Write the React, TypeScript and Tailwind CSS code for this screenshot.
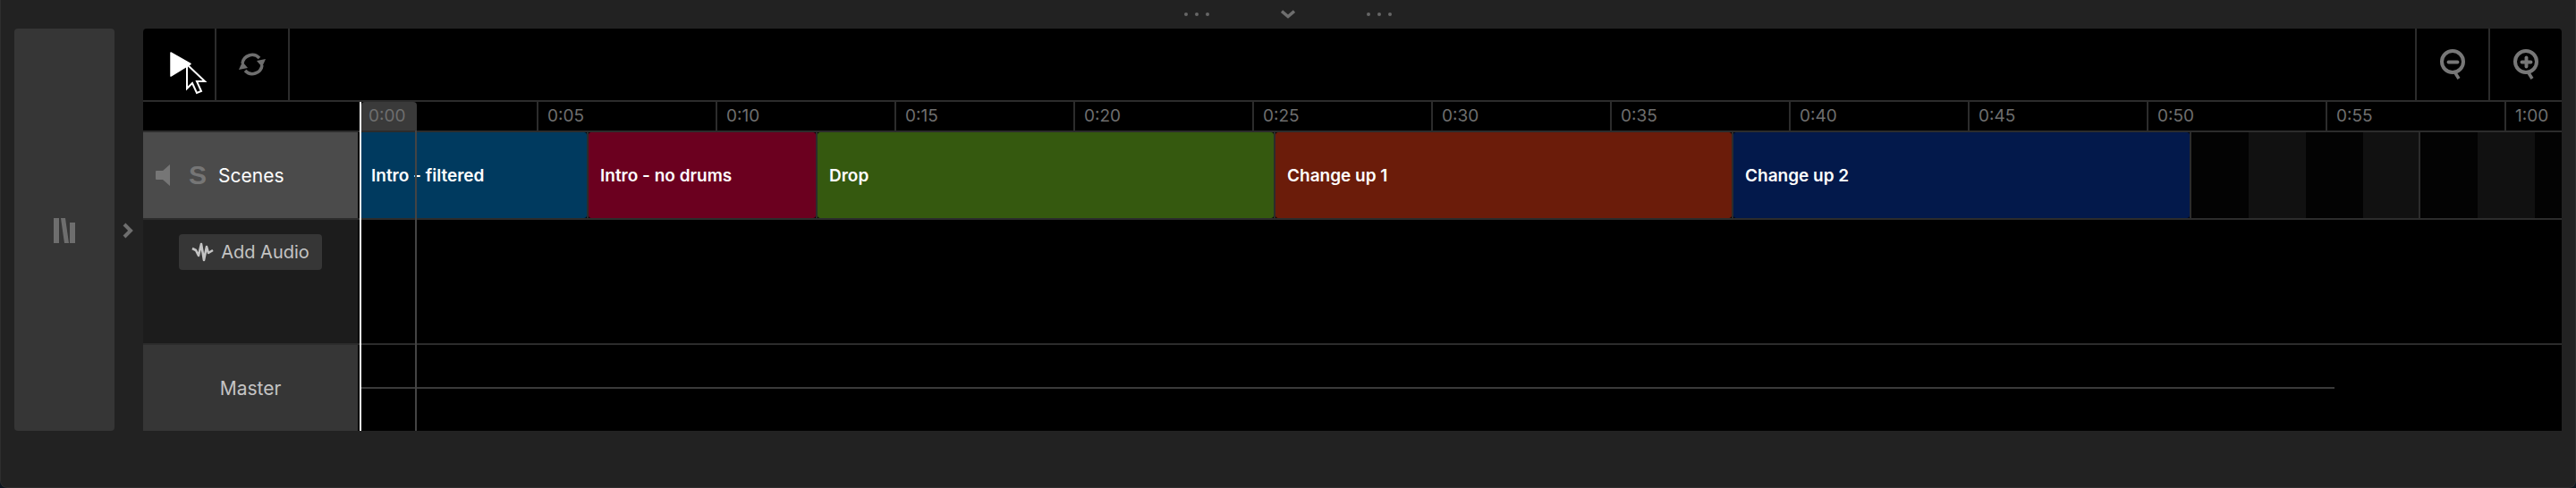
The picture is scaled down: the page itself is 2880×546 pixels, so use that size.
import { Minus, Plus } from 'lucide-react';

const ticks = ['0:00', '0:05', '0:10', '0:15', '0:20', '0:25', '0:30', '0:35', '0:40', '0:45', '0:50', '0:55', '1:00'];

const scenes = [
  { name: 'Intro - filtered', width: 'w-[256px]', color: 'bg-[#003a5f]' },
  { name: 'Intro - no drums', width: 'w-[256px]', color: 'bg-[#6b001f]' },
  { name: 'Drop', width: 'w-[512px]', color: 'bg-[#35590f]' },
  { name: 'Change up 1', width: 'w-[512px]', color: 'bg-[#6b1c0a]' },
  { name: 'Change up 2', width: 'w-[512px]', color: 'bg-[#03194b]' },
];

function Dots() {
  return (
    <div className="flex gap-2">
      <span className="h-1 w-1 rounded-full bg-[#666]" />
      <span className="h-1 w-1 rounded-full bg-[#666]" />
      <span className="h-1 w-1 rounded-full bg-[#666]" />
    </div>
  );
}

function Chevron() {
  return (
    <svg width="16" height="10" viewBox="0 0 16 10" fill="none">
      <path d="M1 1.5 8 7.5l7-6" stroke="#6e6e6e" strokeWidth="3.5" />
    </svg>
  );
}

function PlayIcon() {
  return (
    <svg width="24" height="30" viewBox="0 0 24 30">
      <path d="M1 2 L23 14.5 L1 28 Z" fill="#fff" stroke="#fff" strokeWidth="1.5" strokeLinejoin="round" />
    </svg>
  );
}

function LoopIcon() {
  return (
    <svg width="32" height="26" viewBox="0 0 32 26" fill="none">
      <path d="M5 12a11 11 0 0 1 19-6" stroke="#6e6e6e" strokeWidth="3.5" />
      <path d="M27 14a11 11 0 0 1-19 6" stroke="#6e6e6e" strokeWidth="3.5" />
      <path d="M31 7 21 9l6 7Z" fill="#6e6e6e" />
      <path d="M1 19l10-2-6-7Z" fill="#6e6e6e" />
    </svg>
  );
}

function ZoomIcon({ plus }: { plus?: boolean }) {
  return (
    <div className="relative h-[34px] w-[28px]">
      <div className="flex h-[28px] w-[28px] items-center justify-center rounded-full border-4 border-[#777]">
        {plus ? <Plus size={17} color="#777" strokeWidth={5.5} className="shrink-0" /> : <Minus size={17} color="#777" strokeWidth={5.5} className="shrink-0" />}
      </div>
      <svg className="absolute left-[14px] top-[24px]" width="12" height="12" viewBox="0 0 12 12">
        <path d="M2 1l5 8" stroke="#777" strokeWidth="3.5" />
      </svg>
    </div>
  );
}

function SpeakerIcon() {
  return (
    <svg width="16" height="24" viewBox="0 0 16 24">
      <path d="M16 0v24L8 17H1a1 1 0 0 1-1-1V8a1 1 0 0 1 1-1h7Z" fill="#767676" />
    </svg>
  );
}

function WaveIcon() {
  return (
    <svg width="26" height="22" viewBox="0 0 26 22" fill="none">
      <path d="M1 7l4 2 3 6 3-13 3 18 3-15 2 7 5-3" stroke="#c4c4c4" strokeWidth="2.6" strokeLinejoin="round" />
    </svg>
  );
}

function LibraryIcon() {
  return (
    <svg width="24" height="28" viewBox="0 0 24 28" fill="#6e6e6e">
      <rect x="0" y="0" width="6" height="28" />
      <path d="M8 0h5l4 28h-5Z" />
      <rect x="18" y="5" width="6" height="23" />
    </svg>
  );
}

function CursorIcon() {
  return (
    <svg className="absolute left-[206px] top-[70px]" width="26" height="36" viewBox="0 0 26 36">
      <path d="M2 2v27l6-6 5 11 5-2-5-11h9Z" fill="#000" stroke="#fff" strokeWidth="2" />
    </svg>
  );
}

export default function App() {
  return (
    <div className="h-[546px] w-[2880px] bg-[#0c1620]">
      <div className="relative flex h-[546px] flex-col overflow-hidden rounded-b-[8px] border-x border-b border-[#2e2e2e] bg-[#222222] font-['Inter',sans-serif]">
        <div className="flex h-[32px] items-center justify-center gap-[80px]">
          <Dots />
          <Chevron />
          <Dots />
        </div>
        <div className="flex h-[450px] pl-[15px] pr-[15px]">
          <div className="flex w-[112px] items-center justify-center rounded bg-[#363636] pt-[2px]">
            <LibraryIcon />
          </div>
          <div className="flex w-8 items-center justify-center pr-[2px] pt-[2px]">
            <svg width="12" height="18" viewBox="0 0 12 18" fill="none">
              <path d="M2 2 9 9l-7 7" stroke="#6e6e6e" strokeWidth="4" />
            </svg>
          </div>
          <div className="flex flex-1 flex-col overflow-hidden rounded-t bg-black">
            <div className="flex h-[82px] border-b-2 border-[#2c2c2c]">
              <div className="flex w-[82px] items-center justify-center border-r-2 border-[#2c2c2c] pl-1">
                <PlayIcon />
              </div>
              <div className="flex w-[82px] items-center justify-center border-r-2 border-[#2c2c2c]">
                <LoopIcon />
              </div>
              <div className="flex-1" />
              <div className="flex w-[82px] items-center justify-center border-l-2 border-[#2c2c2c]">
                <ZoomIcon />
              </div>
              <div className="flex w-[82px] items-center justify-center border-l-2 border-[#2c2c2c]">
                <ZoomIcon plus />
              </div>
            </div>
            <div className="flex h-[34px] border-b-2 border-[#2c2c2c]">
              <div className="w-[240px]" />
              <div className="relative flex flex-1">
                <div className="absolute left-[4px] top-0 h-[32px] w-[62px] rounded-t bg-[#3a3a3a]" />
                {ticks.map((t, i) => (
                  <div
                    key={t}
                    className={`relative text-[19px] leading-[32px] text-[#6e6e6e] ${i === 12 ? 'flex-1 border-l-2 border-[#2c2c2c] pl-[10px]' : i === 0 ? 'w-[200px] pl-3' : 'w-[200px] border-l-2 border-[#2c2c2c] pl-[10px]'}`}
                  >
                    {t}
                  </div>
                ))}
              </div>
            </div>
            <div className="flex h-[98px] border-b-2 border-[#2c2c2c]">
              <div className="flex w-[240px] items-center bg-[#4b4b4b] pl-[14px]">
                <SpeakerIcon />
                <span className="ml-[21px] font-['Liberation_Sans',sans-serif] text-[30px] font-bold leading-none text-[#767676]">S</span>
                <span className="ml-[13px] pt-[2px] text-[21px] text-white">Scenes</span>
              </div>
              <div className="relative ml-[2px] flex flex-1">
                {scenes.map((s) => (
                  <div key={s.name} className={`${s.width} border-r-2 border-[#2c2c2c]`}>
                    <div className={`${s.color} h-full rounded-[3px] pl-[13px] text-[19px] font-semibold leading-[98px] text-white`}>
                      {s.name}
                    </div>
                  </div>
                ))}
                <div className="flex flex-1">
                  <div className="w-[64px] bg-[#030303]" />
                  <div className="w-[64px] bg-[#111111]" />
                  <div className="w-[64px] bg-[#030303]" />
                  <div className="w-[64px] border-r-2 border-[#2c2c2c] bg-[#111111]" />
                  <div className="w-[64px] bg-[#030303]" />
                  <div className="w-[64px] bg-[#111111]" />
                  <div className="flex-1 bg-[#030303]" />
                </div>
              </div>
            </div>
            <div className="flex h-[140px] border-b-2 border-[#2c2c2c]">
              <div className="flex w-[240px] justify-center bg-[#1c1c1c] pt-4">
                <div className="flex h-[40px] w-[160px] items-center justify-center gap-[7px] rounded bg-[#363636] text-[20px] text-[#c4c4c4]">
                  <WaveIcon />
                  Add Audio
                </div>
              </div>
              <div className="flex-1" />
            </div>
            <div className="flex flex-1">
              <div className="flex w-[240px] items-center justify-center bg-[#363636] pt-[2px] text-[21px] text-[#c4c4c4]">Master</div>
              <div className="ml-[4px] flex flex-1 items-center">
                <div className="h-[2px] w-[2206px] bg-[#3a3a3a]" />
              </div>
            </div>
          </div>
        </div>
        <div className="pointer-events-none absolute left-[401px] top-[114px] h-[368px] w-[2px] bg-white" />
        <div className="pointer-events-none absolute left-[463px] top-[146px] h-[336px] w-[2px] bg-[#444444]" />
        <CursorIcon />
      </div>
    </div>
  );
}
